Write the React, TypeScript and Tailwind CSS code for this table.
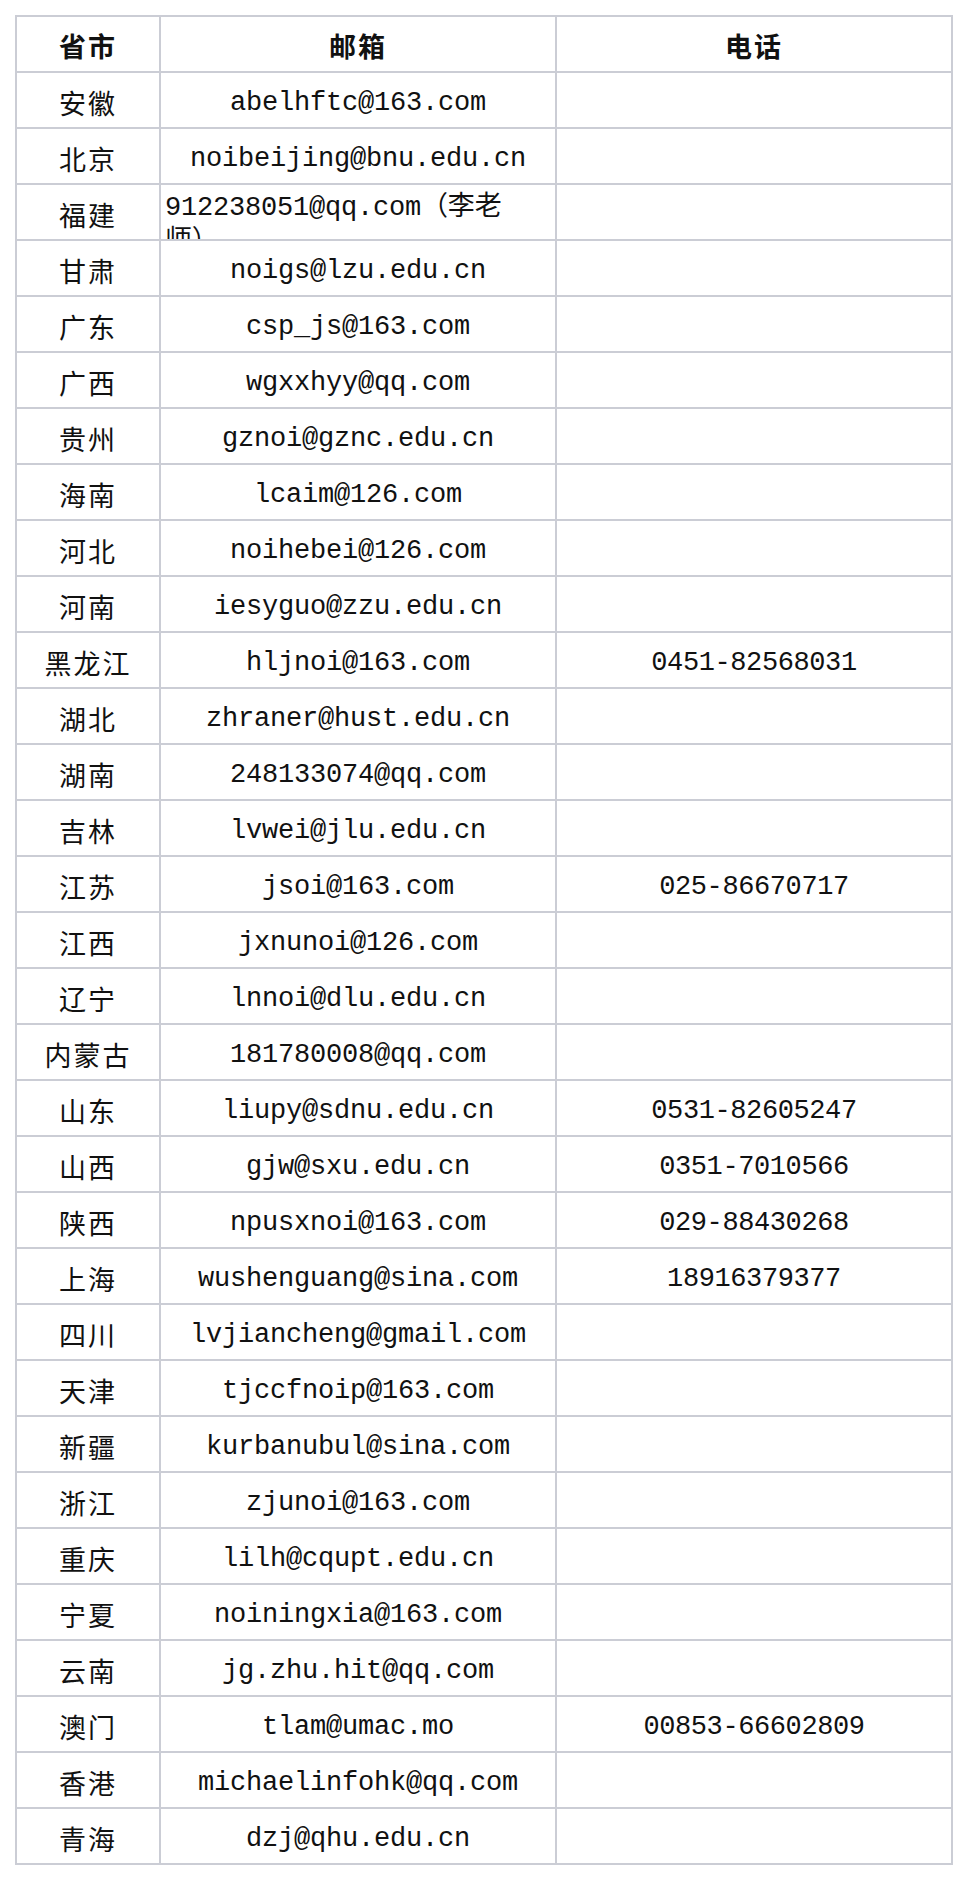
const rows: { province: string; email: string; phone?: string }[] = [
  { province: "安徽", email: "abelhftc@163.com" },
  { province: "北京", email: "noibeijing@bnu.edu.cn" },
  { province: "福建", email: "912238051@qq.com（李老师）" },
  { province: "甘肃", email: "noigs@lzu.edu.cn" },
  { province: "广东", email: "csp_js@163.com" },
  { province: "广西", email: "wgxxhyy@qq.com" },
  { province: "贵州", email: "gznoi@gznc.edu.cn" },
  { province: "海南", email: "lcaim@126.com" },
  { province: "河北", email: "noihebei@126.com" },
  { province: "河南", email: "iesyguo@zzu.edu.cn" },
  { province: "黑龙江", email: "hljnoi@163.com", phone: "0451-82568031" },
  { province: "湖北", email: "zhraner@hust.edu.cn" },
  { province: "湖南", email: "248133074@qq.com" },
  { province: "吉林", email: "lvwei@jlu.edu.cn" },
  { province: "江苏", email: "jsoi@163.com", phone: "025-86670717" },
  { province: "江西", email: "jxnunoi@126.com" },
  { province: "辽宁", email: "lnnoi@dlu.edu.cn" },
  { province: "内蒙古", email: "181780008@qq.com" },
  { province: "山东", email: "liupy@sdnu.edu.cn", phone: "0531-82605247" },
  { province: "山西", email: "gjw@sxu.edu.cn", phone: "0351-7010566" },
  { province: "陕西", email: "npusxnoi@163.com", phone: "029-88430268" },
  { province: "上海", email: "wushenguang@sina.com", phone: "18916379377" },
  { province: "四川", email: "lvjiancheng@gmail.com" },
  { province: "天津", email: "tjccfnoip@163.com" },
  { province: "新疆", email: "kurbanubul@sina.com" },
  { province: "浙江", email: "zjunoi@163.com" },
  { province: "重庆", email: "lilh@cqupt.edu.cn" },
  { province: "宁夏", email: "noiningxia@163.com" },
  { province: "云南", email: "jg.zhu.hit@qq.com" },
  { province: "澳门", email: "tlam@umac.mo", phone: "00853-66602809" },
  { province: "香港", email: "michaelinfohk@qq.com" },
  { province: "青海", email: "dzj@qhu.edu.cn" },
];

const cjk = "font-['Noto_Sans_CJK_SC',sans-serif]";
const mono = "font-['Liberation_Mono','Noto_Sans_CJK_SC',monospace]";

export default function App() {
  return (
    <div className="min-h-screen bg-white text-[#111] pt-[15px] pl-[15px]">
      <div className="w-[938px] border-2 border-[#cbcdd5]">
        {/* Header */}
        <div className="grid grid-cols-[144px_396px_1fr] h-[56px] border-b-2 border-[#cbcdd5]">
          <div className={`${cjk} flex items-center justify-center border-r-2 border-[#cbcdd5] text-[27px] font-semibold tracking-[2px] pt-[5px]`}>
            省市
          </div>
          <div className={`${cjk} flex items-center justify-center border-r-2 border-[#cbcdd5] text-[27px] font-semibold tracking-[2px] pt-[5px]`}>
            邮箱
          </div>
          <div className={`${cjk} flex items-center justify-center text-[27px] font-semibold tracking-[2px] pt-[5px]`}>
            电话
          </div>
        </div>

        {/* Rows */}
        {rows.map((r, i) => (
          <div
            key={r.province}
            className={`grid grid-cols-[144px_396px_1fr] ${
              i === rows.length - 1 ? "h-[54px]" : "h-[56px] border-b-2 border-[#cbcdd5]"
            }`}
          >
            <div className={`${cjk} flex items-center justify-center border-r-2 border-[#cbcdd5] text-[27px] tracking-[2px] pt-[6px]`}>
              {r.province}
            </div>
            {r.province === "福建" ? (
              // too long for the cell: wraps and the second line gets cut off
              <div className={`${mono} overflow-hidden border-r-2 border-[#cbcdd5] pl-[4px] pr-[40px] pt-[6px] text-[27px] leading-[34px] tracking-[-0.2px]`}>
                {r.email}
              </div>
            ) : (
              <div className={`${mono} flex items-center justify-center border-r-2 border-[#cbcdd5] text-[27px] tracking-[-0.2px] pt-[7px] whitespace-nowrap`}>
                {r.email}
              </div>
            )}
            <div className={`${mono} flex items-center justify-center text-[27px] tracking-[-0.4px] pt-[7px]`}>
              {r.phone}
            </div>
          </div>
        ))}
      </div>
    </div>
  );
}
